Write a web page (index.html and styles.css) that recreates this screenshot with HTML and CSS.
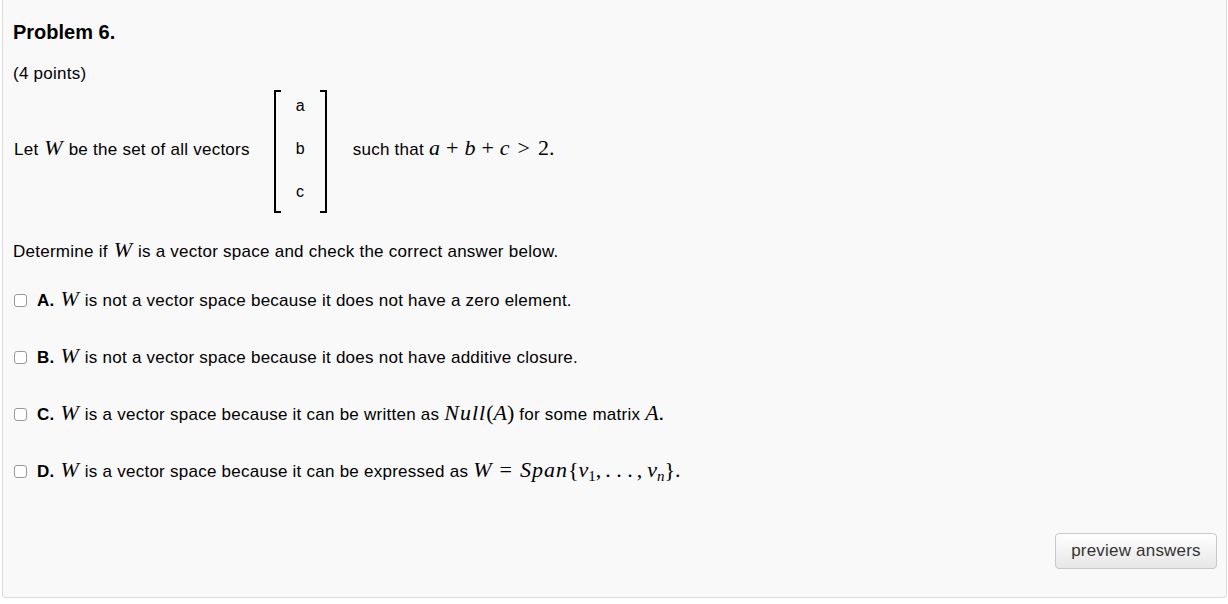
FILE: index.html
```html
<!DOCTYPE html>
<html>
<head>
<meta charset="utf-8">
<link rel="stylesheet" href="styles.css">
</head>
<body>
<div class="problem">
  <div class="title">Problem 6.</div>
  <div class="points">(4 points)</div>
  <div class="statement">
    <span class="txt">Let <span class="mi w">W</span> be the set of all vectors</span>
    <span class="matrix">
      <span class="cell">a</span>
      <span class="cell">b</span>
      <span class="cell">c</span>
    </span>
    <span class="txt">such that <span class="mi">a</span><span class="mo">+</span><span class="mi">b</span><span class="mo">+</span><span class="mi">c</span><span class="mo rel">&gt;</span><span class="mn">2.</span></span>
  </div>
  <div class="question">Determine if <span class="mi w">W</span> is a vector space and check the correct answer below.</div>
  <div class="options">
    <label class="option"><span class="box"></span><span class="otext"><b>A.</b> <span class="mi w">W</span> is not a vector space because it does not have a zero element.</span></label>
    <label class="option"><span class="box"></span><span class="otext"><b>B.</b> <span class="mi w">W</span> is not a vector space because it does not have additive closure.</span></label>
    <label class="option"><span class="box"></span><span class="otext"><b>C.</b> <span class="mi w">W</span> is a vector space because it can be written as <span class="mi word">Null</span><span class="mn">(</span><span class="mi">A</span><span class="mn">)</span> for some matrix <span class="mi">A</span><span class="mn">.</span></span></label>
    <label class="option"><span class="box"></span><span class="otext"><b>D.</b> <span class="mi w">W</span> is a vector space because it can be expressed as <span class="mi">W</span><span class="mo rel">=</span><span class="mi word">Span</span><span class="mn">{</span><span class="mi">v</span><sub class="sub">1</sub><span class="mn">,</span><span class="mn dots">. . .</span><span class="mn">,</span><span class="mi vn">v</span><sub class="sub mi">n</sub><span class="mn">}.</span></span></label>
  </div>
  <div class="actions">
    <button class="btn">preview answers</button>
  </div>
</div>
</body>
</html>
```

FILE: styles.css
```css
html, body {
  margin: 0;
  padding: 0;
  background: #ffffff;
}

body {
  font-family: "Liberation Sans", Arial, sans-serif;
  font-size: 17px;
  letter-spacing: 0.25px;
  color: #000;
}

.problem {
  box-sizing: border-box;
  margin-left: 2px;
  width: 1225px;
  height: 598px;
  border: 1px solid #dcdcdc;
  border-top: none;
  border-radius: 0 0 4px 4px;
  background: #f9f9f9;
  padding: 20px 9px 28px 10px;
  display: flex;
  flex-direction: column;
}

.title {
  font-size: 20px;
  font-weight: bold;
  letter-spacing: 0;
  line-height: 24px;
}

.points {
  margin-top: 20px;
  line-height: 20px;
}

.statement {
  margin-top: 6px;
  display: flex;
  align-items: center;
  padding-left: 1px;
}

.statement .txt {
  position: relative;
  top: -2px;
  line-height: 20px;
}

.matrix {
  margin: 0 26px 0 24px;
  width: 53px;
  height: 123px;
  box-sizing: border-box;
  padding: 5px 0 10px;
  display: flex;
  flex-direction: column;
  gap: 21px;
  align-items: center;
  position: relative;
}

.matrix::before,
.matrix::after {
  content: "";
  position: absolute;
  top: 0;
  bottom: 0;
  width: 5px;
  border-top: 2px solid #000;
  border-bottom: 2px solid #000;
}

.matrix::before {
  left: 0;
  border-left: 2px solid #000;
}

.matrix::after {
  right: 0;
  border-right: 2px solid #000;
}

.cell {
  line-height: 22px;
  font-size: 16px;
}

.mi {
  font-family: "Liberation Serif", "Times New Roman", serif;
  font-style: italic;
  font-size: 22px;
  letter-spacing: 0;
  line-height: 0;
}

.mi.w {
  margin-left: 1px;
  margin-right: 1px;
}

.mi.word {
  letter-spacing: 1px;
}

.mn, .mo {
  font-family: "Liberation Serif", "Times New Roman", serif;
  font-size: 22px;
  letter-spacing: 0;
  line-height: 0;
}

.mo {
  margin: 0 6px;
}

.mo.rel {
  margin: 0 8px;
}

.mn.dots {
  margin: 0 4px;
  letter-spacing: 0;
}

.mi.vn {
  margin-left: 5px;
}

.sub {
  font-family: "Liberation Serif", "Times New Roman", serif;
  font-size: 15px;
  letter-spacing: 0;
  vertical-align: -4px;
  line-height: 0;
}

.question {
  margin-top: 29px;
  line-height: 20px;
}

.options {
  margin-top: 29px;
  display: flex;
  flex-direction: column;
  gap: 37px;
}

.option {
  display: flex;
  align-items: center;
  height: 20px;
  line-height: 20px;
  padding-left: 1px;
}

.box {
  box-sizing: border-box;
  width: 13px;
  height: 13px;
  border: 1px solid #999999;
  border-radius: 3px;
  background: #ffffff;
  margin-right: 10px;
  position: relative;
  top: -1px;
  flex: none;
}

.otext b {
  font-weight: bold;
}

.actions {
  margin-top: auto;
  display: flex;
  justify-content: flex-end;
}

.btn {
  box-sizing: border-box;
  width: 162px;
  height: 36px;
  font-family: "Liberation Sans", Arial, sans-serif;
  font-size: 17px;
  letter-spacing: 0.2px;
  color: #333;
  background: linear-gradient(#ffffff, #e6e6e6);
  border: 1px solid #c8c8c8;
  border-radius: 4px;
  padding: 0;
}
```
